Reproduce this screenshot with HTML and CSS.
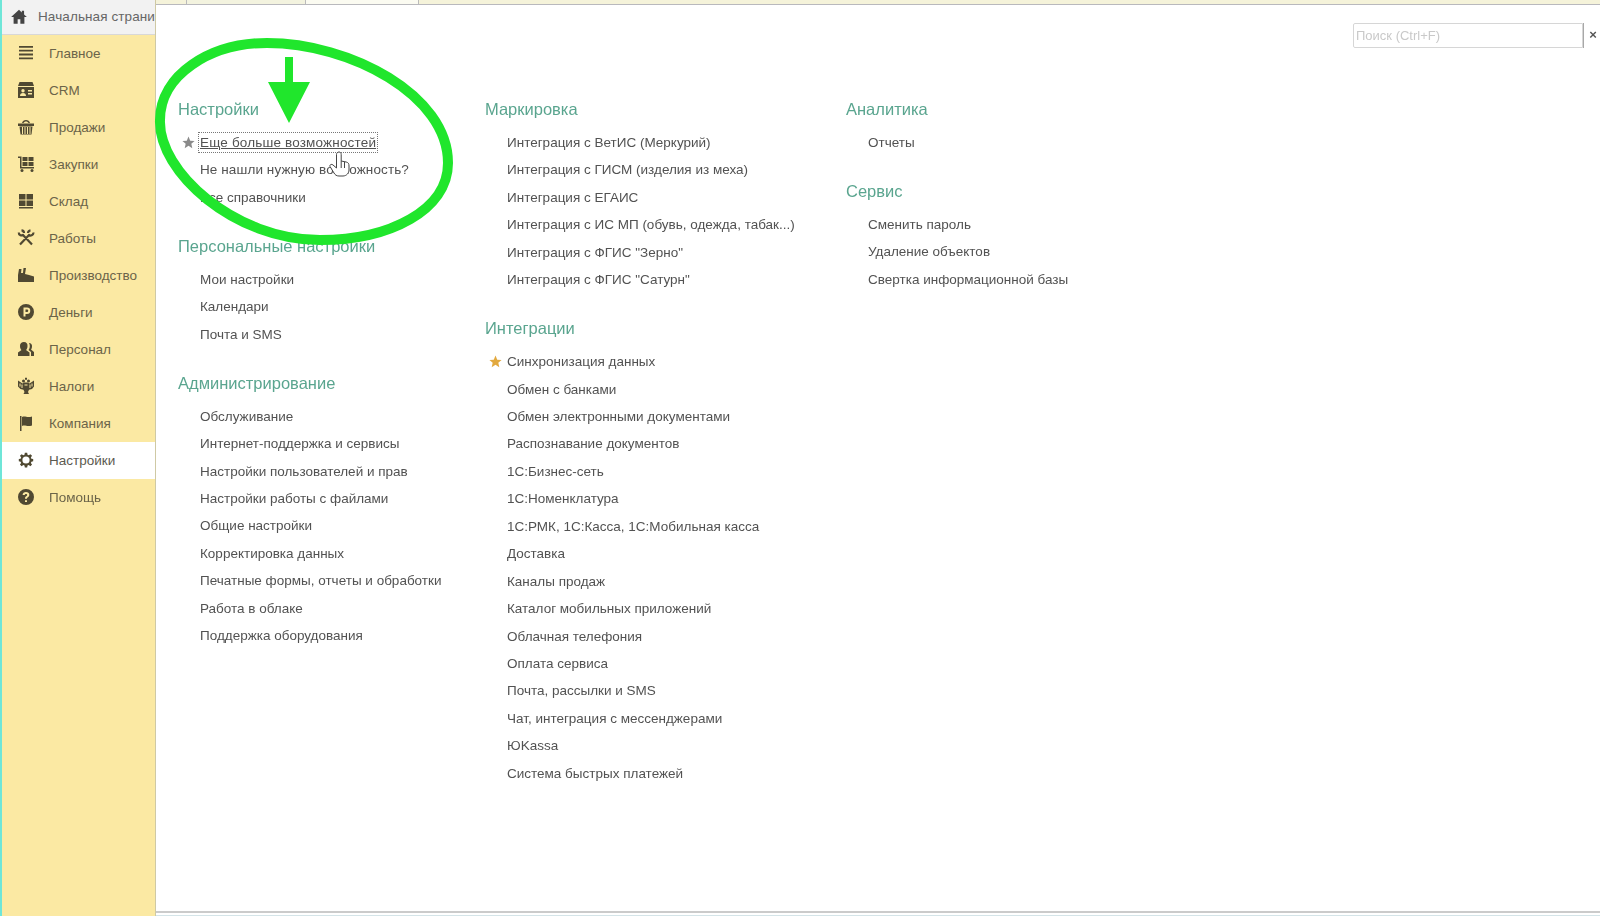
FILE: index.html

```html
<!doctype html>
<html lang="ru">
<head>
<title>Настройки</title>
<meta charset="utf-8">
<link rel="stylesheet" href="styles.css">
</head>
<body>
<div class="app">
	<aside class="side">
		<div class="home">
			<svg class="home-ico" viewBox="0 0 16 16"><path d="M8 1.500 1 8h2.200v6h3.600v-4h2.400v4h3.600V8H15l-2.500-2.300V2.500h-2v1.400z"/></svg>
			<span class="home-text">Начальная страни</span>
		</div>
		<nav class="menu">
			<a class="item"><svg viewBox="0 0 18 18"><path d="M2 2h14v1.800H2zM2 5.800h14v1.800H2zM2 9.600h14v1.800H2zM2 13.400h14v1.800H2z"/></svg>Главное</a>
			<a class="item"><svg viewBox="0 0 18 18"><path fill-rule="evenodd" d="M2.500 1h13l1.500 4H1zM1 6h16v11H1zM6 8a1.700 1.700 0 1 0 0 3.400A1.700 1.700 0 0 0 6 8zM3 15h6c0-2-1-3-3-3s-3 1-3 3zM11 9v1.500h4V9zm0 3v1.500h4V12z"/></svg>CRM</a>
			<a class="item"><svg viewBox="0 0 18 18"><path d="M9 2C7 2 5.500 3.300 5 5h1.500C6.900 4.100 7.800 3.500 9 3.500s2.100.6 2.500 1.500H13c-.5-1.700-2-3-4-3zM1 5.500h16V8H1zM2.500 8.500h13l-1 8h-11z"/><path class="cut" d="M5.500 9v7M8 9v7M10.500 9v7M13 9v7"/></svg>Продажи</a>
			<a class="item"><svg viewBox="0 0 18 18"><path d="M1 1.500h3.500V12H17v1.500H3V3H1zM5.500 2h5v4h-5zM11.500 2h5v4h-5zM5.500 7h5v4h-5zM11.500 7h5v4h-5z"/><circle cx="5" cy="15.500" r="1.500"/><circle cx="15" cy="15.500" r="1.500"/></svg>Закупки</a>
			<a class="item"><svg viewBox="0 0 18 18"><path d="M2 2h6.500v5.500H2zM9.500 2H16v5.500H9.500zM2 8.500h6.500V14H2zM9.500 8.500H16V14H9.500zM2 15h14v1.500H2z"/></svg>Склад</a>
			<a class="item"><svg viewBox="0 0 18 18"><path class="tool" d="M5.500 5.500 15 15.500M12.500 5.500 3 15.500M1.800 3.500A2.700 2.700 0 0 0 6.500 5.500M4.500 1.300A2.700 2.700 0 0 1 7 4M11 4a3 3 0 0 1 2.500-2.700M16.300 3.500A2.700 2.700 0 0 1 11.500 5.500"/></svg>Работы</a>
			<a class="item"><svg viewBox="0 0 18 18"><path d="M1 16V9l1-6h2.500L4 7h2l.5-5H9L8 8l4 1 5 1.500V16z"/></svg>Производство</a>
			<a class="item"><svg viewBox="0 0 18 18"><path fill-rule="evenodd" d="M9 1a8 8 0 1 1 0 16A8 8 0 0 1 9 1zM6.500 4.500v9h2V11H10a3.200 3.200 0 0 0 0-6.500zm2 2H10A1.200 1.200 0 0 1 10 9H8.500z"/></svg>Деньги</a>
			<a class="item"><svg viewBox="0 0 18 18"><path d="M7 2a3.800 3.800 0 0 1 3.500 4c0 2-.8 3.400-1.500 4l3.500 2.500V16H1v-3.500L4.500 10C3.800 9.400 3 8 3 6a3.800 3.800 0 0 1 4-4zM12 3a3 3 0 0 1 3 3.500c0 1.500-.6 2.500-1 3l3 2.500V16h-3v-4l-2.500-2c.8-1 1.300-2.200 1.300-4 0-1-.2-2-.8-3z"/></svg>Персонал</a>
			<a class="item"><svg viewBox="0 0 18 18"><circle cx="6.500" cy="4" r="1.500"/><circle cx="11.500" cy="4" r="1.500"/><path d="M8 .8h2v2H8zM1 3.500l4.500 3L7 5.500h4l1.500 1 4.500-3v6l-2 2.500-3 .8-1 2.200 1 2H6.500l1-2-1-2.200-3-.8L1 9.500z"/><path class="cut" d="M3 6.500v3M5 7.500v3.500M15 6.500v3M13 7.500v3.500M7.500 8h3"/></svg>Налоги</a>
			<a class="item"><svg viewBox="0 0 18 18"><path d="M3 2h1.500v15H3zM5 3c3-1.500 5 1 10-.5v9c-5 1.500-7-1-10 .5z"/></svg>Компания</a>
			<a class="item active"><svg viewBox="-1 -1 20 20"><path fill-rule="evenodd" d="M7.700 1h2.600l.4 2.200 1.300.6 1.900-1.300 1.800 1.800-1.300 1.900.6 1.300 2 .4v2.600l-2 .4-.6 1.300 1.300 1.900-1.800 1.800-1.900-1.300-1.300.6-.4 2.200H7.700l-.4-2.200-1.300-.6-1.900 1.300-1.800-1.800 1.300-1.900-.6-1.300-2-.4V7.900l2-.4.6-1.300-1.300-1.900 1.800-1.800L6 3.800l1.300-.6zM9 5a4 4 0 1 0 0 8 4 4 0 0 0 0-8z"/></svg>Настройки</a>
			<a class="item"><svg viewBox="0 0 18 18"><path fill-rule="evenodd" d="M9 1a8 8 0 1 1 0 16A8 8 0 0 1 9 1zM9 4C7 4 5.700 5.200 5.600 7h2.100c.1-.7.600-1.100 1.300-1.100s1.200.4 1.200 1c0 .6-.4.900-1 1.300-.9.600-1.200 1.200-1.200 2.300v.3h2v-.2c0-.6.200-.9.900-1.400.9-.6 1.400-1.300 1.400-2.400C12.300 5 11 4 9 4zm-1 8.200V14h2v-1.800z"/></svg>Помощь</a>
		</nav>
	</aside>

	<div class="page">
		<div class="tabs">
			<span class="tab"></span>
			<span class="tab tab-wide"></span>
		</div>
		<div class="content">
			<div class="search">
				<span class="search-input">Поиск (Ctrl+F)</span>
				<span class="search-clear">×</span>
			</div>
			<div class="cols">
				<div class="col col-1">
					<section class="group">
						<h2>Настройки</h2>
						<a class="link starred"><svg class="star" viewBox="0 0 12 12"><path d="M6 .5 7.600 4.300l4 .3-3 2.600.9 4L6 9.100l-3.500 2.100.9-4-3-2.600 4-.3z"/></svg><span class="focus">Еще больше возможностей</span></a>
						<a class="link wide">Не нашли нужную возможность?</a>
						<a class="link">Все справочники</a>
					</section>
					<section class="group">
						<h2>Персональные настройки</h2>
						<a class="link">Мои настройки</a>
						<a class="link">Календари</a>
						<a class="link">Почта и SMS</a>
					</section>
					<section class="group">
						<h2>Администрирование</h2>
						<a class="link">Обслуживание</a>
						<a class="link">Интернет-поддержка и сервисы</a>
						<a class="link">Настройки пользователей и прав</a>
						<a class="link">Настройки работы с файлами</a>
						<a class="link">Общие настройки</a>
						<a class="link">Корректировка данных</a>
						<a class="link">Печатные формы, отчеты и обработки</a>
						<a class="link">Работа в облаке</a>
						<a class="link">Поддержка оборудования</a>
					</section>
				</div>
				<div class="col col-2">
					<section class="group">
						<h2>Маркировка</h2>
						<a class="link">Интеграция с ВетИС (Меркурий)</a>
						<a class="link">Интеграция с ГИСМ (изделия из меха)</a>
						<a class="link">Интеграция с ЕГАИС</a>
						<a class="link">Интеграция с ИС МП (обувь, одежда, табак...)</a>
						<a class="link">Интеграция с ФГИС "Зерно"</a>
						<a class="link">Интеграция с ФГИС "Сатурн"</a>
					</section>
					<section class="group">
						<h2>Интеграции</h2>
						<a class="link starred"><svg class="star gold" viewBox="0 0 12 12"><path d="M6 .5 7.600 4.300l4 .3-3 2.600.9 4L6 9.100l-3.500 2.100.9-4-3-2.600 4-.3z"/></svg>Синхронизация данных</a>
						<a class="link">Обмен с банками</a>
						<a class="link">Обмен электронными документами</a>
						<a class="link">Распознавание документов</a>
						<a class="link">1С:Бизнес-сеть</a>
						<a class="link">1С:Номенклатура</a>
						<a class="link">1С:РМК, 1С:Касса, 1С:Мобильная касса</a>
						<a class="link">Доставка</a>
						<a class="link">Каналы продаж</a>
						<a class="link">Каталог мобильных приложений</a>
						<a class="link">Облачная телефония</a>
						<a class="link">Оплата сервиса</a>
						<a class="link">Почта, рассылки и SMS</a>
						<a class="link">Чат, интеграция с мессенджерами</a>
						<a class="link">ЮKassa</a>
						<a class="link">Система быстрых платежей</a>
					</section>
				</div>
				<div class="col col-3">
					<section class="group">
						<h2>Аналитика</h2>
						<a class="link">Отчеты</a>
					</section>
					<section class="group">
						<h2>Сервис</h2>
						<a class="link">Сменить пароль</a>
						<a class="link">Удаление объектов</a>
						<a class="link">Свертка информационной базы</a>
					</section>
				</div>
			</div>
		</div>
		<div class="bottom"></div>
	</div>
</div>

<!-- marks drawn over the video -->
<svg class="marks" viewBox="0 0 1600 916">
	<path d="M267 43C350 43 448 95 448 163 448 210 390 240 320 240 235 240 158 172 160 120 160 75 210 43 267 43Z" fill="none" stroke="#20e62c" stroke-width="10"/>
	<path d="M285 57h8v25h17l-21 41-21-41h17z" fill="#20e62c"/>
	<path d="M339 152c1.500 0 2.200 1 2.200 2.500v6.500l5 1c2 .5 2.800 1.500 2.800 4v4c0 3-2.500 6-6 6h-4c-2.500 0-4-1.200-5-3l-4-6.500c-.8-1.500 1.500-3 3-1.500l3.500 3v-13.500c0-1.500 1-2.500 2.500-2.500z" fill="#fff" stroke="#444" stroke-width="1"/>
	<path d="M341.200 161v7M344.500 162v6" fill="none" stroke="#444" stroke-width="1"/>
</svg>
</body>
</html>
```

FILE: styles.css

```css
* {
	box-sizing: border-box;
}
html, body {
	height: 100%;
}
body {
	margin: 0;
	overflow: hidden;
	background: #fff;
	color: #525252;
	font-family: "Liberation Sans", Arial, sans-serif;
	font-size: 13.5px;
}
.app {
	display: flex;
	height: 916px;
	filter: blur(0.5px);
}

/* left panel */
.side {
	width: 156px;
	flex: none;
	display: flex;
	flex-direction: column;
	background: #fbe9a3;
	border-left: 2px solid #6fe6d8;
	border-right: 1px solid #cfc9a4;
}
.home {
	height: 34.5px;
	flex: none;
	display: flex;
	align-items: center;
	padding-left: 8px;
	gap: 10px;
	background: #f2f2f2;
	border-bottom: 1px solid #d8d8d8;
	white-space: nowrap;
	font-size: 13.5px;
	color: #666;
}
.home-ico {
	width: 18px;
	height: 18px;
	flex: none;
	fill: #444;
}
.home-text {
	letter-spacing: 0.1px;
}
.menu {
	display: flex;
	flex-direction: column;
}
.item {
	height: 37px;
	display: flex;
	align-items: center;
	padding-left: 15px;
	gap: 14px;
	color: #6b6449;
}
.item svg {
	width: 18px;
	height: 18px;
	flex: none;
	fill: #504932;
}
.item .cut {
	fill: none;
	stroke: #fbe9a3;
	stroke-width: 1;
}
.item .tool {
	fill: none;
	stroke: #504932;
	stroke-width: 2.2;
}
.item.active {
	background: #fff;
	color: #5c5a50;
}

/* right part */
.page {
	flex: 1;
	display: flex;
	flex-direction: column;
	min-width: 0;
}
.tabs {
	height: 5px;
	flex: none;
	display: flex;
	padding-left: 30px;
	background: #f5f3da;
	border-bottom: 1px solid #b9b9bd;
}
.tab {
	width: 119px;
	background: #f3f3df;
	border-left: 1px solid #bbb;
}
.tab-wide {
	width: 114px;
	border-right: 1px solid #bbb;
	background: #fbfbf1;
}
.content {
	flex: 1;
	padding-top: 18px;
	display: flex;
	flex-direction: column;
}
.search {
	align-self: flex-end;
	display: flex;
	height: 25px;
	font-size: 13px;
}
.search-input {
	width: 230px;
	padding: 4px 2px;
	border: 1px solid #d6d6d6;
	border-radius: 2px 0 0 2px;
	color: #c9c9c9;
}
.search-clear {
	width: 17px;
	padding-left: 2px;
	text-align: center;
	line-height: 23px;
	border-left: 1px solid #a8a8a8;
	color: #555;
	font-weight: bold;
}
.cols {
	display: flex;
	padding: 46px 0 0 22px;
}
.col-1 {
	width: 307px;
}
.col-2 {
	width: 361px;
}
.group {
	display: flex;
	flex-direction: column;
	margin-bottom: 19.5px;
}
.group h2 {
	margin: 0 0 5px;
	height: 30px;
	line-height: 30px;
	font-size: 16.5px;
	font-weight: normal;
	color: #5aa58f;
}
.link {
	position: relative;
	height: 27.45px;
	line-height: 27.45px;
	padding-left: 22px;
	white-space: nowrap;
}
.link.wide {
	letter-spacing: 0.1px;
}
.star {
	position: absolute;
	left: 4px;
	top: 7px;
	width: 13px;
	height: 13px;
	fill: #8a8a8a;
}
.star.gold {
	fill: #e2a93f;
}
.focus {
	display: inline-block;
	line-height: 17px;
	letter-spacing: 0.17px;
	text-decoration: underline;
	outline: 1px dotted #777;
	outline-offset: 1px;
}
.bottom {
	height: 5px;
	flex: none;
	border-top: 2px solid #cbcbcb;
	border-bottom: 1px solid #d4e4e8;
}

/* green marks */
.marks {
	position: absolute;
	left: 0;
	top: 0;
	width: 1600px;
	height: 916px;
	pointer-events: none;
}
```
